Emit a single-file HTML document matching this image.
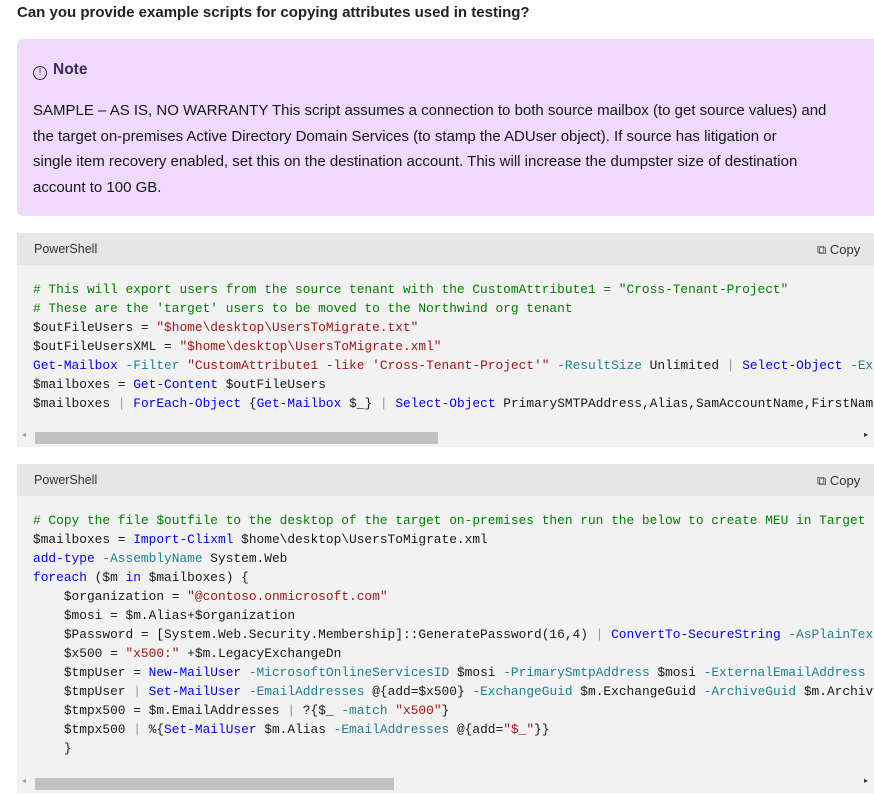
<!DOCTYPE html>
<html><head><meta charset="utf-8"><style>
body{margin:0;width:874px;height:794px;overflow:hidden;background:#fff;font-family:"Liberation Sans",sans-serif;color:#171717}
.t{position:absolute;left:17px;top:2px;font-size:15px;font-weight:bold;line-height:22px;color:#222}
.note{position:absolute;left:17px;top:39px;width:870px;height:177px;background:#efd9fd;border-radius:6px}
.nh{position:absolute;left:16px;top:20px;font-size:15.5px;font-weight:bold;color:#3b2e58;line-height:22px}
.nb{position:absolute;left:16px;top:59px;width:845px;font-size:15px;line-height:25.7px;color:#171717;white-space:nowrap}
.cb{position:absolute;left:17px;width:870px;background:#f2f2f2}
.hd{height:32px;background:#e6e6e6;position:relative;font-size:12.5px;color:#333}
.hd .l{position:absolute;left:17px;top:9px}
.hd .c{position:absolute;left:800px;top:9px;font-size:13px}
pre{margin:0;padding:0 0 0 16px;font-family:"Liberation Mono",monospace;font-size:12.85px;line-height:19px;color:#171717;white-space:pre;overflow:hidden;width:840px}
.g{color:#008000}.s{color:#a31515}.b{color:#0101fd}.p{color:#1f7f8f}.k{color:#0101fd}.bar{color:#999}
.sb{position:absolute;left:0;height:12px;width:857px}
.th{position:absolute;left:18px;top:0;height:12px;background:#c1c1c1}
</style></head><body>
<div class="t">Can you provide example scripts for copying attributes used in testing?</div>
<div class="note"><div class="nh"><span style="display:inline-block;width:14px;height:14px;border:1.3px solid #3b2e58;border-radius:50%;font-size:10px;text-align:center;line-height:12px;vertical-align:-1px;margin-right:6px;box-sizing:border-box;font-weight:normal">!</span>Note</div>
<div class="nb">SAMPLE – AS IS, NO WARRANTY This script assumes a connection to both source mailbox (to get source values) and<br>the target on-premises Active Directory Domain Services (to stamp the ADUser object). If source has litigation or<br>single item recovery enabled, set this on the destination account. This will increase the dumpster size of destination<br>account to 100 GB.</div></div>

<div class="cb" style="top:233px;height:214px">
<div class="hd"><span class="l">PowerShell</span><span class="c">⧉ Copy</span></div>
<pre style="margin-top:15px"><span class="g"># This will export users from the source tenant with the CustomAttribute1 = "Cross-Tenant-Project"
# These are the 'target' users to be moved to the Northwind org tenant</span>
$outFileUsers = <span class="s">"$home\desktop\UsersToMigrate.txt"</span>
$outFileUsersXML = <span class="s">"$home\desktop\UsersToMigrate.xml"</span>
<span class="b">Get-Mailbox</span> <span class="p">-Filter</span> <span class="s">"CustomAttribute1 -like 'Cross-Tenant-Project'"</span> <span class="p">-ResultSize</span> Unlimited <span class="bar">|</span> <span class="b">Select-Object</span> <span class="p">-ExpandProperty</span>
$mailboxes = <span class="b">Get-Content</span> $outFileUsers
$mailboxes <span class="bar">|</span> <span class="b">ForEach-Object</span> {<span class="b">Get-Mailbox</span> $_} <span class="bar">|</span> <span class="b">Select-Object</span> PrimarySMTPAddress,Alias,SamAccountName,FirstName</pre>
<div class="sb" style="top:199px"><span style="position:absolute;left:5px;top:-2px;font-size:8px;color:#999">◂</span><div class="th" style="width:403px"></div><span style="position:absolute;left:847px;top:-2px;font-size:8px;color:#333">▸</span></div>
</div>

<div class="cb" style="top:464px;height:329px">
<div class="hd"><span class="l">PowerShell</span><span class="c">⧉ Copy</span></div>
<pre style="margin-top:15px"><span class="g"># Copy the file $outfile to the desktop of the target on-premises then run the below to create MEU in Target</span>
$mailboxes = <span class="b">Import-Clixml</span> $home\desktop\UsersToMigrate.xml
<span class="b">add-type</span> <span class="p">-AssemblyName</span> System.Web
<span class="k">foreach</span> ($m <span class="k">in</span> $mailboxes) {
    $organization = <span class="s">"@contoso.onmicrosoft.com"</span>
    $mosi = $m.Alias+$organization
    $Password = [System.Web.Security.Membership]::GeneratePassword(16,4) <span class="bar">|</span> <span class="b">ConvertTo-SecureString</span> <span class="p">-AsPlainText</span>
    $x500 = <span class="s">"x500:"</span> +$m.LegacyExchangeDn
    $tmpUser = <span class="b">New-MailUser</span> <span class="p">-MicrosoftOnlineServicesID</span> $mosi <span class="p">-PrimarySmtpAddress</span> $mosi <span class="p">-ExternalEmailAddress</span> $m
    $tmpUser <span class="bar">|</span> <span class="b">Set-MailUser</span> <span class="p">-EmailAddresses</span> @{add=$x500} <span class="p">-ExchangeGuid</span> $m.ExchangeGuid <span class="p">-ArchiveGuid</span> $m.ArchiveGuid
    $tmpx500 = $m.EmailAddresses <span class="bar">|</span> ?{$_ <span class="p">-match</span> <span class="s">"x500"</span>}
    $tmpx500 <span class="bar">|</span> %{<span class="b">Set-MailUser</span> $m.Alias <span class="p">-EmailAddresses</span> @{add=<span class="s">"$_"</span>}}
    }</pre>
<div class="sb" style="top:314px"><span style="position:absolute;left:5px;top:-2px;font-size:8px;color:#999">◂</span><div class="th" style="width:359px"></div><span style="position:absolute;left:847px;top:-2px;font-size:8px;color:#333">▸</span></div>
</div>
</body></html>
